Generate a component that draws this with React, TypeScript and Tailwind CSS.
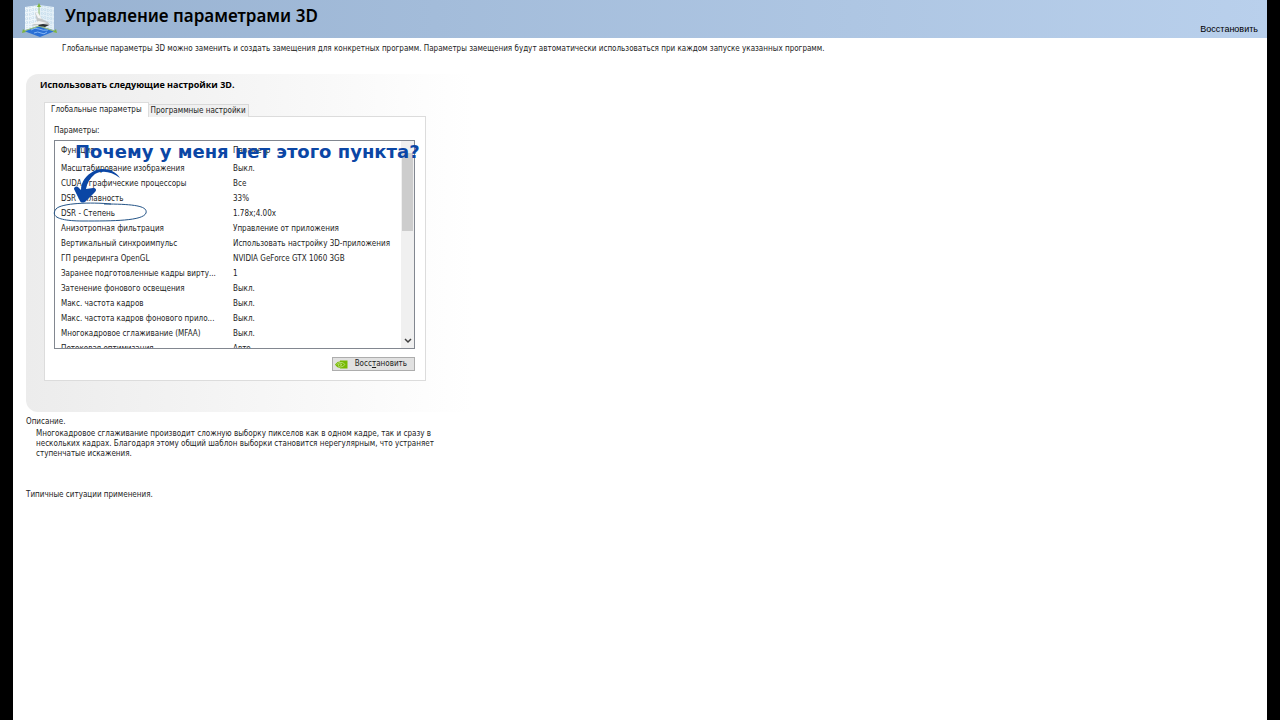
const settings = [
  { name: 'Масштабирование изображения', value: 'Выкл.' },
  { name: 'CUDA - графические процессоры', value: 'Все' },
  { name: 'DSR - Плавность', value: '33%' },
  { name: 'DSR - Степень', value: '1.78x;4.00x' },
  { name: 'Анизотропная фильтрация', value: 'Управление от приложения' },
  { name: 'Вертикальный синхроимпульс', value: 'Использовать настройку 3D-приложения' },
  { name: 'ГП рендеринга OpenGL', value: 'NVIDIA GeForce GTX 1060 3GB' },
  { name: 'Заранее подготовленные кадры вирту...', value: '1' },
  { name: 'Затенение фонового освещения', value: 'Выкл.' },
  { name: 'Макс. частота кадров', value: 'Выкл.' },
  { name: 'Макс. частота кадров фонового прило...', value: 'Выкл.' },
  { name: 'Многокадровое сглаживание (MFAA)', value: 'Выкл.' },
  { name: 'Потоковая оптимизация', value: 'Авто' },
];

function SceneIcon() {
  return (
    <svg viewBox="0 0 36 36" className="mt-[2px] h-9 w-9 shrink-0" aria-hidden="true">
      <path d="M3 5 17 3v21L3 28Z" fill="#eef6fb" />
      <path d="M17 3 32 5v23L17 24Z" fill="#e3eff7" />
      <path
        d="M5 5v22M8 5v22M11 4v21M14 4v21M20 4v21M23 4v21M26 5v22M29 5v22M3 9l14-2 15 2M3 13l14-2 15 2M3 17l14-2 15 2M3 21l14-2 15 2"
        stroke="#a9cbe2"
        strokeWidth="0.6"
        strokeDasharray="1 1"
        fill="none"
      />
      <path d="M17 24 33 29 18 35 2 29Z" fill="#2a70d6" />
      <path d="M9 28q4-3 8-1t9 1M12 31q4-2 7 0t6-1" stroke="#82b4f4" fill="none" />
      <path d="M17 4v19M17 24 2 29M17 24l15 5" stroke="#9bc27c" strokeWidth="1.2" fill="none" />
      <path d="m17 1 2 4h-4ZM0 31l1-4 3 3ZM35 31l-4-1 3-3Z" fill="#7fb53c" />
      <path d="m13 10 3 1 4 6 6 3 2 3-4 1-7-1-8 1 6-4Z" fill="#c3c7c9" />
      <path d="m13 10 3 1 4 6-4-1Z" fill="#f5f5f5" />
      <path d="m8 22 9-3 8 2-5 1Z" fill="#f1f2f2" />
      <path d="m16 23 5-1 6 1-4 2-6-1Z" fill="#2c3033" />
    </svg>
  );
}

function NvidiaIcon() {
  return (
    <svg viewBox="0 0 13 9" className="h-[9px] w-[13px] shrink-0" aria-hidden="true">
      <path d="M5 .5h7.500v8H5Z" fill="#76b900" />
      <path d="M0 4.500Q3 .5 7 1.500q3 1 4 3-2 3-5 3.500Q2 8 0 4.500Z" fill="#76b900" />
      <path
        d="M1.500 4.500Q4 1.500 7 2.500q2 .5 3 2Q8 7 5.500 7 3 7 3 4.800 5 2.800 7 4.500 6 6 5 5"
        fill="none"
        stroke="#d9efb0"
        strokeWidth="0.6"
      />
    </svg>
  );
}

function SettingsTable() {
  return (
    <div className="flex h-[209px] overflow-hidden border border-[#828790] bg-white">
      <div className="min-w-0 flex-1 overflow-hidden">
        <table className="w-full table-fixed border-collapse text-left whitespace-nowrap">
          <thead>
            <tr className="h-5">
              <th className="w-[172px] pl-[6px] font-normal">Функция</th>
              <th className="pl-[6px] font-normal">Параметр</th>
            </tr>
          </thead>
          <tbody>
            {settings.map((row) => (
              <tr key={row.name} className="h-[15px]">
                <td className="pl-[6px]">{row.name}</td>
                <td className="pl-[6px]">{row.value}</td>
              </tr>
            ))}
          </tbody>
        </table>
      </div>
      <div className="flex w-[13px] flex-col items-center justify-between bg-[#f0f0f0] pb-1">
        <div className="mt-3 h-[78px] w-[11px] bg-[#cdcdcd]" />
        <svg viewBox="0 0 8 6" className="h-[6px] w-2" aria-hidden="true">
          <path d="m1 1 3 3 3-3" fill="none" stroke="#404040" strokeWidth="1.5" />
        </svg>
      </div>
    </div>
  );
}

function Annotation() {
  return (
    <div className="pointer-events-none absolute top-[64px] left-[27px] text-[#0b46a5]">
      <p className="pl-[22px] font-['DejaVu_Sans'] text-[18px] leading-[28px] font-bold whitespace-nowrap">
        Почему у меня нет этого пункта?
      </p>
      <svg viewBox="0 0 96 56" className="h-14 w-24" aria-hidden="true">
        <path
          d="M67 12C61 3 50 1 41 5c-8 4-13 11-13 19l-3-3c-2-1-4 0-4 2l6 12c1 2 4 2 6 0l9-9c2-2 1-4-2-4l-7 1c1-6 4-11 9-15 7-4 16-3 25 4Z"
          fill="currentColor"
        />
        <path
          d="M58 38C38 36 8 37 3 43c-6 8 4 12 27 12 30 0 60 0 63-8 2-7-12-9-42-9"
          fill="none"
          stroke="#245487"
        />
      </svg>
    </div>
  );
}

export default function App() {
  return (
    <div className="min-h-screen bg-black px-[13px] font-['DejaVu_Sans_Condensed','DejaVu_Sans',sans-serif] text-[8px] leading-[10px] text-[#1c1c1c]">
      <div className="min-h-screen bg-white">
        <header className="flex h-[38px] items-start bg-linear-to-r from-[#98b2d1] to-[#b9d0ec] pr-[9px] pl-[9px]">
          <SceneIcon />
          <h1 className="pt-1 pl-[7px] font-['Noto_Sans',sans-serif] text-[17px] leading-6 font-semibold text-black">
            Управление параметрами 3D
          </h1>
          <button type="button" className="mt-6 ml-auto font-['Liberation_Sans',sans-serif] text-[9px] text-black">
            Восстановить
          </button>
        </header>

        <main className="px-[13px]">
          <p className="pt-[6px] pl-9">
            Глобальные параметры 3D можно заменить и создать замещения для конкретных программ. Параметры замещения
            будут автоматически использоваться при каждом запуске указанных программ.
          </p>

          <section className="relative mt-5 max-w-[446px] rounded-l-xl bg-linear-to-r from-[#ececec] to-white pt-[6px] pr-[46px] pb-[31px] pl-[18px]">
            <h2 className="-ml-1 font-['Open_Sans',sans-serif] text-[9px] font-bold text-black">
              Использовать следующие настройки 3D.
            </h2>

            <div className="mt-3 flex items-end" role="tablist">
              <button
                type="button"
                role="tab"
                aria-selected="true"
                className="h-[15px] border border-b-0 border-[#dcdcdc] bg-white px-[6px]"
              >
                Глобальные параметры
              </button>
              <button
                type="button"
                role="tab"
                aria-selected="false"
                className="h-[13px] border border-b-0 border-l-0 border-[#d9d9d9] bg-[#f0f0f0] px-[2px]"
              >
                Программные настройки
              </button>
              <span className="flex-1 border-b border-[#dcdcdc]" />
            </div>

            <div className="border border-t-0 border-[#dcdcdc] bg-white pt-[9px] pr-[10px] pb-[9px] pl-[9px]">
              <h3 className="pb-1">Параметры:</h3>
              <SettingsTable />
              <div className="flex justify-end pt-2">
                <button
                  type="button"
                  className="flex h-[14px] items-center gap-[7px] border border-[#adadad] bg-[#e1e1e1] pr-[7px] pl-[2px]"
                >
                  <NvidiaIcon />
                  <span>
                    Восс<u>т</u>ановить
                  </span>
                </button>
              </div>
            </div>

            <Annotation />
          </section>

          <section className="max-w-[430px] pt-[5px]">
            <h2>Описание.</h2>
            <p className="pt-[2px] pl-[10px]">
              Многокадровое сглаживание производит сложную выборку пикселов как в одном кадре, так и сразу в нескольких
              кадрах. Благодаря этому общий шаблон выборки становится нерегулярным, что устраняет ступенчатые искажения.
            </p>
          </section>

          <h2 className="pt-[31px]">Типичные ситуации применения.</h2>
        </main>
      </div>
    </div>
  );
}
